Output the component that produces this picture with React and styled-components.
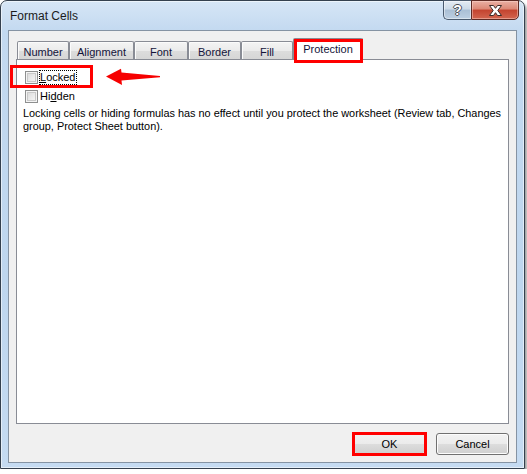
import React from 'react'
import styled, { createGlobalStyle } from 'styled-components'

const GlobalStyle = createGlobalStyle`
  html, body {
    margin: 0;
    padding: 0;
    background: #ffffff;
  }
  body {
    font-family: "Liberation Sans", Arial, sans-serif;
    font-size: 11px;
    color: #000;
  }
`

const tabs = [
  { name: 'Number', width: 52 },
  { name: 'Alignment', width: 65 },
  { name: 'Font', width: 54 },
  { name: 'Border', width: 53 },
  { name: 'Fill', width: 52 },
  { name: 'Protection', width: 70, selected: true },
]

export default function App() {
  return (
    <>
      <GlobalStyle />
      <Window>
        <TitleBar>
          <Title>Format Cells</Title>
          <CaptionButtons>
            <HelpButton>?</HelpButton>
            <CloseButton>
              <svg width="15" height="11" viewBox="0 0 15 11">
                <path
                  d="M1.5 0.5H5.5L7.5 3.3L9.5 0.5H13.5L9.8 5.5L13.5 10.5H9.5L7.5 7.7L5.5 10.5H1.5L5.2 5.5Z"
                  fill="#fff"
                  stroke="#3b2a28"
                  strokeWidth="1"
                  strokeLinejoin="round"
                />
              </svg>
            </CloseButton>
          </CaptionButtons>
        </TitleBar>

        <Client>
          <TabStrip>
            {tabs.map((t) =>
              t.selected ? (
                <SelectedTab key={t.name} $w={t.width}>{t.name}</SelectedTab>
              ) : (
                <Tab key={t.name} $w={t.width}>{t.name}</Tab>
              )
            )}
          </TabStrip>

          <Panel>
            <CheckRow>
              <Annotated>
                <CheckBox />
                <Label $focused>
                  <Accel>L</Accel>ocked
                </Label>
              </Annotated>
              <Arrow width="56" height="18" viewBox="0 0 56 18">
                <polygon
                  points="1,8.5 16,0.8 16.5,4.5 55,8 55,9.2 16.5,12.5 17,17"
                  fill="#f60000"
                />
              </Arrow>
            </CheckRow>
            <CheckRow>
              <CheckBox />
              <Label>
                Hi<Accel>d</Accel>den
              </Label>
            </CheckRow>
            <Note>
              Locking cells or hiding formulas has no effect until you protect the worksheet (Review tab, Changes
              <br />
              group, Protect Sheet button).
            </Note>
          </Panel>

          <ButtonRow>
            <DialogButton $marked>OK</DialogButton>
            <DialogButton>Cancel</DialogButton>
          </ButtonRow>
        </Client>
      </Window>
    </>
  )
}

const Window = styled.div`
  width: 525px;
  height: 469px;
  box-sizing: border-box;
  border: 1px solid #34404e;
  border-radius: 7px 7px 0 0;
  background: linear-gradient(180deg, #d6e6f6 0px, #c3d9f0 30px, #bed6ee 60%, #c5dbf2 100%);
  box-shadow: 2px 3px 3px rgba(0, 0, 0, 0.4), inset 0 0 0 1px rgba(255, 255, 255, 0.55);
  padding: 0 7px 5px 7px;
  display: flex;
  flex-direction: column;
`

const TitleBar = styled.div`
  height: 29px;
  margin: 0 -7px;
  padding-left: 9px;
  display: flex;
  align-items: flex-start;
`

const Title = styled.div`
  padding-top: 8px;
  line-height: 15px;
  font-size: 12px;
  color: #1b1b1b;
`

const CaptionButtons = styled.div`
  margin-left: auto;
  margin-right: 5px;
  margin-top: -1px;
  display: flex;
`

const CaptionButton = styled.div`
  height: 20px;
  box-sizing: border-box;
  display: flex;
  align-items: center;
  justify-content: center;
`

const HelpButton = styled(CaptionButton)`
  width: 28px;
  border: 1px solid #4a5a6e;
  border-right: none;
  border-radius: 0 0 0 5px;
  background: linear-gradient(180deg, #e3ebf4 0%, #ccdae8 45%, #aabfd5 50%, #bccfe2 100%);
  box-shadow: inset 0 0 0 1px rgba(255, 255, 255, 0.45);
  color: #fff;
  font-weight: bold;
  font-size: 14px;
  text-shadow: 1px 0 #4a4f57, -1px 0 #4a4f57, 0 1px #4a4f57, 0 -1px #4a4f57;
`

const CloseButton = styled(CaptionButton)`
  width: 48px;
  border: 1px solid #5e2a24;
  border-radius: 0 0 5px 0;
  background: linear-gradient(180deg, #eab0a4 0%, #dc8775 45%, #c4432f 50%, #d2654f 100%);
  box-shadow: inset 0 0 0 1px rgba(255, 220, 210, 0.45);
`

const Client = styled.div`
  flex: 1;
  border: 1px solid #8593a3;
  background: #f0f0f0;
  padding: 7px 7px;
  display: flex;
  flex-direction: column;
`

const TabStrip = styled.div`
  height: 21px;
  padding-left: 1px;
  display: flex;
  align-items: flex-end;
  position: relative;
  z-index: 1;
`

const Tab = styled.div`
  width: ${(p) => p.$w}px;
  height: 18px;
  box-sizing: border-box;
  border: 1px solid #898c95;
  border-bottom: none;
  border-radius: 2px 2px 0 0;
  background: linear-gradient(180deg, #f4f4f4 0%, #ebebeb 50%, #dddddd 51%, #d6d6d6 100%);
  box-shadow: inset 1px 1px 0 #fbfbfb;
  display: flex;
  align-items: center;
  justify-content: center;
  padding-top: 2px;
  color: #14143a;
`

const SelectedTab = styled.div`
  width: ${(p) => p.$w}px;
  height: 22px;
  margin-bottom: -1px;
  box-sizing: border-box;
  border: 1px solid #898c95;
  border-bottom: none;
  border-radius: 2px 2px 0 0;
  background: #ffffff;
  display: flex;
  align-items: center;
  justify-content: center;
  padding-bottom: 2px;
  color: #14143a;
  position: relative;

  &::after {
    content: '';
    position: absolute;
    inset: 0 -1px -3px 0;
    border: 3px solid #ff0000;
  }
`

const Panel = styled.div`
  height: 365px;
  box-sizing: border-box;
  border: 1px solid #898c95;
  background: #ffffff;
  padding: 9px 6px;
`

const CheckRow = styled.div`
  height: 16px;
  margin-bottom: 3px;
  display: flex;
  align-items: center;
`

const Annotated = styled.div`
  display: flex;
  align-items: center;
  position: relative;

  &::before {
    content: '';
    position: absolute;
    left: -13px;
    top: -5px;
    width: 83px;
    height: 23px;
    box-sizing: border-box;
    border: 3px solid #ff0000;
  }
`

const CheckBox = styled.span`
  width: 13px;
  height: 13px;
  margin-left: 2px;
  box-sizing: border-box;
  border: 1px solid #8e8f8f;
  background: linear-gradient(135deg, #d6d6d6 0%, #e9e9e9 50%, #fbfbfb 100%);
  box-shadow: inset 0 0 0 1px #f4f4f4, inset 0 0 0 2px #c9c9c9;
`

const Label = styled.span`
  margin-left: 1px;
  padding: 0 1px 0 0;
  line-height: 13px;
  border: 1px dotted ${(p) => (p.$focused ? '#000' : 'transparent')};
`

const Accel = styled.span`
  text-decoration: underline;
`

const Arrow = styled.svg`
  margin-left: 28px;
  display: block;
`

const Note = styled.p`
  margin: 0;
  font-size: 10.9px;
  line-height: 13px;
  white-space: nowrap;
`

const ButtonRow = styled.div`
  margin-top: 9px;
  display: flex;
  justify-content: flex-end;
  gap: 10px;
`

const DialogButton = styled.button`
  width: 73px;
  height: 22px;
  box-sizing: border-box;
  border: 1px solid #707070;
  border-radius: 3px;
  background: linear-gradient(180deg, #f2f2f2 0%, #ebebeb 50%, #dddddd 51%, #cfcfcf 100%);
  box-shadow: inset 0 0 0 1px #fcfcfc;
  font-family: "Liberation Sans", Arial, sans-serif;
  font-size: 11px;
  color: #000;
  padding: 0;
  position: relative;

  &::after {
    content: '';
    display: ${(p) => (p.$marked ? 'block' : 'none')};
    position: absolute;
    inset: -2px;
    border: 3px solid #ff0000;
  }
`
